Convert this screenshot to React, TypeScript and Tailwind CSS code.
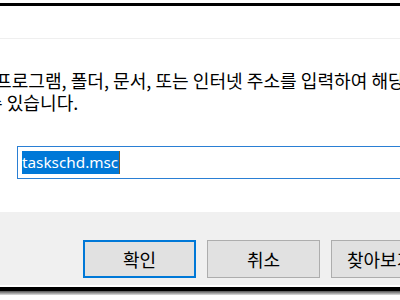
import React from "react";

export default function App() {
  const kr = { fontFamily: '"Noto Sans CJK KR", "Noto Sans", sans-serif' };
  return (
    <div className="w-[400px] h-[300px] bg-white overflow-hidden flex flex-col">
      <div className="h-[3px] shrink-0 bg-white" />
      <div className="h-[3px] shrink-0 bg-black" />
      <div className="h-[33px] shrink-0 bg-white border-b border-[#efefef]" />
      <div className="h-[173px] shrink-0 bg-white flex flex-col">
        <div
          className="mt-[30px] ml-[-5px] text-[18.1px] leading-[22px] text-black whitespace-nowrap"
          style={kr}
        >
          <div>프로그램, 폴더, 문서, 또는 인터넷 주소를 입력하여 해당</div>
          <div className="ml-[-9px]">수 있습니다.</div>
        </div>
        <div className="mt-[33px] ml-[17px] w-[420px] h-[33px] border border-[#2a7fd4] flex items-center pl-[4px]">
          <span
            className="bg-[#0078d7] text-white text-[15.3px] leading-[23px] pr-[1px]"
            style={{ fontFamily: '"Noto Sans", "Open Sans", sans-serif' }}
          >
            taskschd.msc
          </span>
          <span className="w-[1px] h-[23px] bg-[#7a5a2a]" />
        </div>
      </div>
      <div className="h-[73px] shrink-0 bg-[#f0f0f0] flex items-start pt-[28px] pl-[83px] gap-[11px]">
        <div
          className="w-[113px] h-[38px] shrink-0 bg-[#e1e1e1] border-2 border-[#0078d7] flex items-center justify-center text-[18px] text-black"
          style={kr}
        >
          확인
        </div>
        <div
          className="w-[113px] h-[38px] shrink-0 bg-[#e1e1e1] border border-[#adadad] flex items-center justify-center text-[18px] text-black"
          style={kr}
        >
          취소
        </div>
        <div
          className="w-[113px] h-[38px] shrink-0 bg-[#e1e1e1] border border-[#adadad] flex items-center justify-start pl-[15px] text-[18px] text-black whitespace-nowrap"
          style={kr}
        >
          찾아보기
        </div>
      </div>
      <div className="h-[2px] shrink-0 bg-white" />
      <div className="h-[4px] shrink-0 bg-black" />
      <div className="h-[4px] shrink-0 bg-gradient-to-b from-[#555555] to-[#e0e0e0]" />
      <div className="flex-1 bg-white" />
    </div>
  );
}
